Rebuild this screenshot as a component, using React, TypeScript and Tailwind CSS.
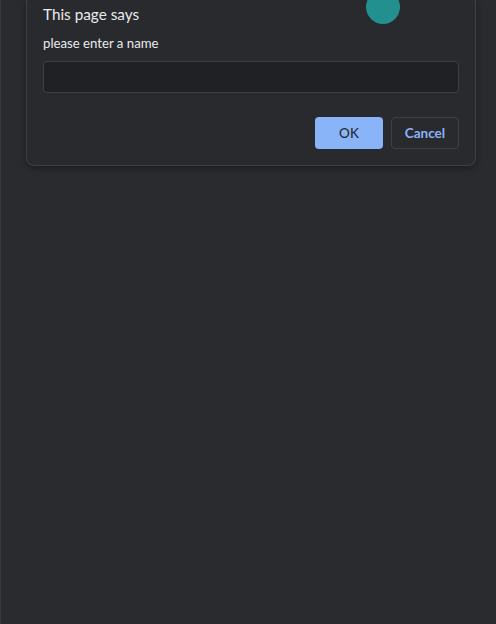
export default function App() {
  return (
    <div
      className="relative min-h-screen h-[624px] overflow-hidden bg-[#2a2b2f] border-l border-[#3a3b3f]"
      style={{ fontFamily: 'Lato, "Noto Sans", sans-serif' }}
    >
      {/* Prompt dialog, top cut off by the viewport */}
      <div className="ml-[25px] w-[450px] rounded-b-lg border border-t-0 border-[#3f4044] bg-[#292a2d] px-4 pb-4 shadow-[0_2px_6px_rgba(0,0,0,0.35)]">
        <div className="pt-1 text-[15.3px] leading-5 text-[#e8eaed]">This page says</div>
        <div className="mt-[10px] text-[13.2px] leading-[18px] text-[#e8eaed]">please enter a name</div>
        <input
          type="text"
          className="mt-[9px] block h-8 w-full rounded border border-[#3c4043] bg-[#202124] px-2 text-[13px] text-[#e8eaed] outline-none"
        />
        <div className="mt-6 flex justify-end gap-2">
          <button className="h-8 w-[68px] rounded bg-[#8ab4f8] text-[13.5px] text-[#202124]">OK</button>
          <button className="h-8 w-[68px] rounded border border-[#3c4043] bg-[#292a2d] text-[13.5px] font-bold text-[#8ab4f8]">
            Cancel
          </button>
        </div>
      </div>

      {/* click indicator */}
      <div className="absolute left-[365px] top-[-10px] h-[34px] w-[34px] rounded-full bg-[#21908f]" />
    </div>
  );
}
